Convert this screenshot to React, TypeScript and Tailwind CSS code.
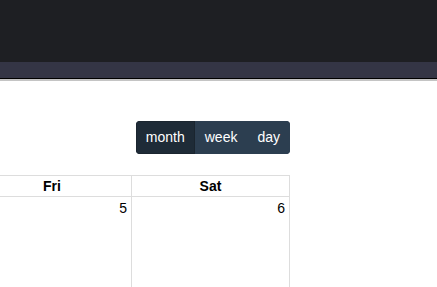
export default function App() {
  const views = ["month", "week", "day"];
  const active = "month";

  return (
    <div className="h-[287px] w-[437px] overflow-hidden bg-white font-['Liberation_Sans',Arial,sans-serif]">
      {/* top app bar */}
      <div className="h-[62px] bg-[#1e1f23]" />
      <div className="h-4 bg-[#343545]" />
      <div className="h-px bg-black" />
      <div className="h-[2px] bg-[#c4c4c4]" />

      {/* calendar */}
      <div className="ml-[-27px] w-[317px] pt-[40px] text-[14px]">
        <div className="flex justify-end">
          <div className="flex overflow-hidden rounded-[4px]">
            {views.map((v) => (
              <button
                key={v}
                className={
                  "border px-[9px] py-[5px] leading-[21px] text-white " +
                  (v === active
                    ? "border-[#1a252f] bg-[#1e2b37]"
                    : "border-[#2c3e50] bg-[#2c3e50]")
                }
              >
                {v}
              </button>
            ))}
          </div>
        </div>

        <div className="mt-[21px] grid grid-cols-[158px_158px] border-t border-r border-[#dddddd] text-[#000]">
          <div className="border-b border-[#dddddd] py-[2px] text-center font-bold leading-[16px]">Fri</div>
          <div className="border-b border-l border-[#dddddd] py-[2px] text-center font-bold leading-[16px]">Sat</div>
          <div className="h-[120px] px-[4px] pt-[3px] text-right leading-[17px]">5</div>
          <div className="h-[120px] border-l border-[#dddddd] px-[4px] pt-[3px] text-right leading-[17px]">6</div>
        </div>
      </div>
    </div>
  );
}
